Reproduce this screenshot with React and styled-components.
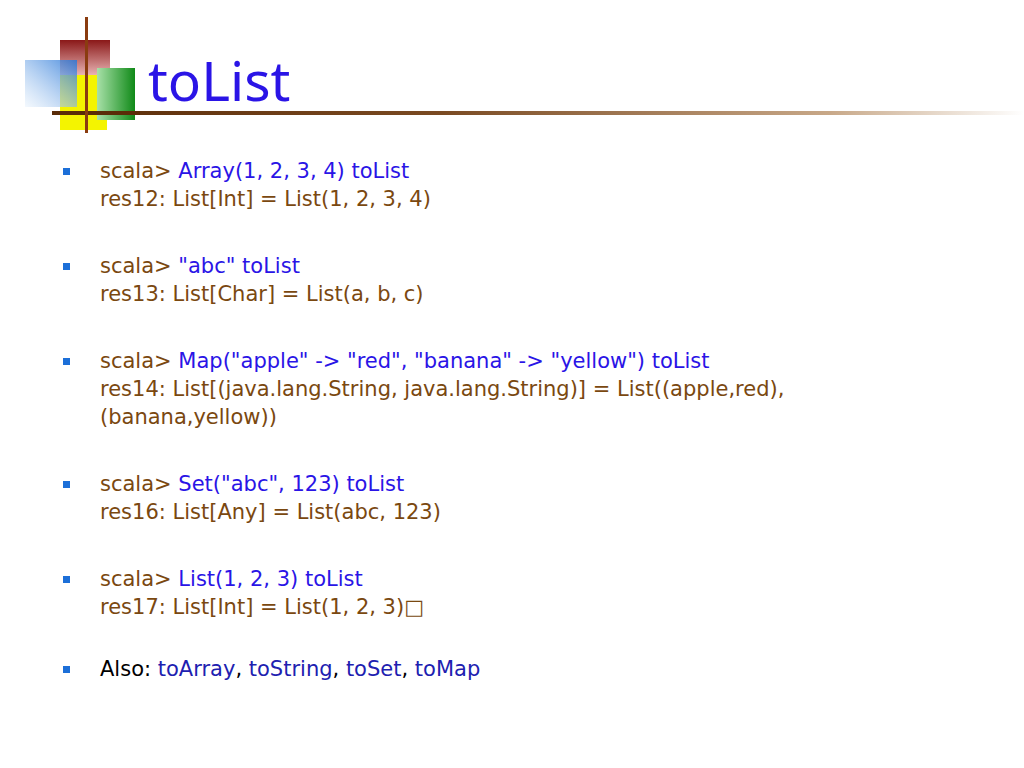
import React from 'react';
import styled, { createGlobalStyle } from 'styled-components';

const Global = createGlobalStyle`
  body { margin: 0; background: #fff; font-family: "DejaVu Sans", "Noto Sans", sans-serif; }
`;

const Slide = styled.div`
  width: 1024px;
  height: 768px;
  position: relative;
  overflow: hidden;
`;

const Header = styled.div`
  position: relative;
  height: 150px;
`;

const Title = styled.h1`
  margin: 0;
  padding: 50px 0 0 148px;
  font-family: "Noto Sans", sans-serif;
  font-size: 55px;
  line-height: 60px;
  font-weight: 400;
  color: #2a14e6;
`;

const Rule = styled.div`
  margin: 1px 0 0 52px;
  height: 4px;
  background: linear-gradient(to right, #5a2c08 0%, #7a4a22 40%, #c8a888 80%, #fff 100%);
`;

const Logo = styled.svg`
  position: absolute;
  left: 0;
  top: 0;
`;

const List = styled.ul`
  list-style: none;
  margin: 0;
  padding: 0 0 0 63px;
  display: flex;
  flex-direction: column;
  gap: 39px;
  position: relative;
  top: 7px;
`;

const Item = styled.li`
  display: flex;
  gap: 30px;
  font-size: 21px;
  line-height: 28px;
  color: #7a4810;
  margin-top: ${p => p.$tight ? '-5px' : '0'};
`;

const Bullet = styled.span`
  flex: none;
  width: 7px;
  height: 7px;
  margin-top: 11px;
  background: #1c6fd8;
`;

const Body = styled.div`
  width: 800px;
`;

const Blue = styled.span`
  color: ${p => p.$dark ? '#2020b0' : '#2a14e6'};
`;

const Black = styled.span`
  color: #000;
`;

const items = [
  ['Array(1, 2, 3, 4) toList', 'res12: List[Int] = List(1, 2, 3, 4)'],
  ['"abc" toList', 'res13: List[Char] = List(a, b, c)'],
  ['Map("apple" -> "red", "banana" -> "yellow") toList', 'res14: List[(java.lang.String, java.lang.String)] = List((apple,red), (banana,yellow))'],
  ['Set("abc", 123) toList', 'res16: List[Any] = List(abc, 123)'],
  ['List(1, 2, 3) toList', 'res17: List[Int] = List(1, 2, 3)\u25A1'],
];

export default function App() {
  return (
    <Slide>
      <Global />
      <Header>
        <Title>toList</Title>
        <Rule />
        <Logo width="140" height="140" viewBox="0 0 140 140">
          <defs>
            <linearGradient id="red" x1="0" y1="0" x2="0" y2="1">
              <stop offset="0" stopColor="#8a1818" />
              <stop offset="1" stopColor="#f0c0c0" />
            </linearGradient>
            <linearGradient id="blue" x1="1" y1="0" x2="0" y2="1">
              <stop offset="0" stopColor="#2a78d8" />
              <stop offset="1" stopColor="#e8f2fc" stopOpacity="0.6" />
            </linearGradient>
            <linearGradient id="green" x1="1" y1="0" x2="0" y2="0">
              <stop offset="0" stopColor="#108a18" />
              <stop offset="1" stopColor="#a8e0a8" />
            </linearGradient>
          </defs>
          <rect x="60" y="40" width="50" height="38" fill="url(#red)" />
          <rect x="60" y="75" width="47" height="55" fill="#f4f400" />
          <rect x="97" y="68" width="38" height="52" fill="url(#green)" />
          <rect x="25" y="60" width="52" height="47" fill="url(#blue)" opacity="0.85" />
          <rect x="52" y="111" width="90" height="4" fill="#5a2c08" />
          <rect x="85" y="17" width="3" height="116" fill="#8a3c10" />
        </Logo>
      </Header>
      <List>
        {items.map(([cmd, res], i) => (
          <Item key={i}>
            <Bullet />
            <Body>
              scala&gt; <Blue>{cmd}</Blue>
              <br />
              {res}
            </Body>
          </Item>
        ))}
        <Item $tight>
          <Bullet />
          <Body>
            <Black>Also: </Black>
            <Blue $dark>toArray</Blue><Black>, </Black>
            <Blue $dark>toString</Blue><Black>, </Black>
            <Blue $dark>toSet</Blue><Black>, </Black>
            <Blue $dark>toMap</Blue>
          </Body>
        </Item>
      </List>
    </Slide>
  );
}
